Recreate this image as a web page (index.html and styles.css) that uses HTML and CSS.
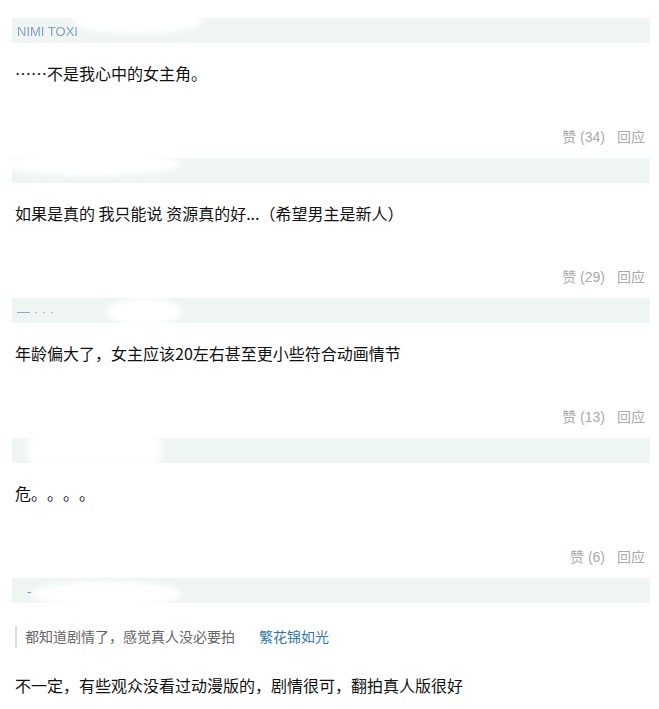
FILE: index.html
```html
<!DOCTYPE html>
<html lang="zh-CN">
<head>
    <meta charset="UTF-8">
    <meta name="viewport" content="width=device-width, initial-scale=1.0">
    <title>评论</title>
    <link rel="stylesheet" href="styles.css">
</head>
<body>
    <div class="comments">
        <div class="comment">
            <div class="comment-head">
                <span class="author">NIMI TOXI</span>
                <span class="smudge smudge-a"></span>
            </div>
            <p class="comment-text">……不是我心中的女主角。</p>
            <div class="comment-actions">
                <a class="vote">赞 (34)</a>
                <a class="reply">回应</a>
            </div>
        </div>

        <div class="comment">
            <div class="comment-head">
                <span class="smudge smudge-b"></span>
            </div>
            <p class="comment-text">如果是真的 我只能说 资源真的好...（希望男主是新人）</p>
            <div class="comment-actions">
                <a class="vote">赞 (29)</a>
                <a class="reply">回应</a>
            </div>
        </div>

        <div class="comment">
            <div class="comment-head">
                <span class="author">— · · ·</span>
                <span class="smudge smudge-c"></span>
            </div>
            <p class="comment-text">年龄偏大了，女主应该20左右甚至更小些符合动画情节</p>
            <div class="comment-actions">
                <a class="vote">赞 (13)</a>
                <a class="reply">回应</a>
            </div>
        </div>

        <div class="comment">
            <div class="comment-head">
                <span class="smudge smudge-d"></span>
            </div>
            <p class="comment-text">危。。。。</p>
            <div class="comment-actions">
                <a class="vote">赞 (6)</a>
                <a class="reply">回应</a>
            </div>
        </div>

        <div class="comment last">
            <div class="comment-head">
                <span class="author short">-</span>
                <span class="smudge smudge-e"></span>
            </div>
            <blockquote class="quote">
                都知道剧情了，感觉真人没必要拍<a class="quote-author">繁花锦如光</a>
            </blockquote>
            <p class="comment-text">不一定，有些观众没看过动漫版的，剧情很可，翻拍真人版很好</p>
        </div>
    </div>
</body>
</html>
```

FILE: styles.css
```css
body {
    margin: 0;
    background: #fff;
    color: #111;
    font-family: "Liberation Sans", "Noto Sans CJK SC", sans-serif;
    text-spacing-trim: space-all;
}

.comments {
    padding-top: 18px;
}

.comment {
    padding-bottom: 11px;
}

.comment.last {
    padding-bottom: 0;
}

/* 用户名栏：浅绿灰底 */
.comment-head {
    position: relative;
    height: 25px;
    margin: 0 9px 0 12px;
    background: #eff5f2;
    overflow: hidden;
}

.author {
    display: inline-block;
    padding: 5px 0 0 5px;
    font-size: 13px;
    line-height: 18px;
    color: #5f86ad;
    opacity: 0.75;
}

.author.short {
    padding-left: 15px;
    opacity: 1;
}

/* 打码的白色涂抹块 */
.smudge {
    position: absolute;
    background: #fff;
    border-radius: 50%;
    filter: blur(3px);
}

.smudge-a {
    left: 60px;
    top: -10px;
    width: 130px;
    height: 26px;
}

.smudge-b {
    left: -10px;
    top: -6px;
    width: 180px;
    height: 24px;
}

.smudge-c {
    left: 95px;
    top: 0;
    width: 75px;
    height: 28px;
}

.smudge-d {
    left: 15px;
    top: -4px;
    width: 135px;
    height: 32px;
    border-radius: 12px;
}

.smudge-e {
    left: 20px;
    top: 3px;
    width: 150px;
    height: 26px;
}

.comment-text {
    margin: 18px 0 0;
    padding-left: 15px;
    font-family: "Noto Sans CJK SC", "Liberation Sans", sans-serif;
    font-size: 16px;
    line-height: 24px;
}

.comment-actions {
    display: flex;
    justify-content: flex-end;
    gap: 12px;
    margin-top: 42px;
    padding-right: 14px;
    font-size: 14px;
    line-height: 20px;
    color: #aaa;
}

.quote {
    margin: 23px 0 0 15px;
    padding-left: 8px;
    border-left: 2px solid #ddd;
    font-size: 14px;
    line-height: 22px;
    color: #666;
}

.quote-author {
    margin-left: 24px;
    color: #3377aa;
}

.comment.last .comment-text {
    margin-top: 25px;
}
```
